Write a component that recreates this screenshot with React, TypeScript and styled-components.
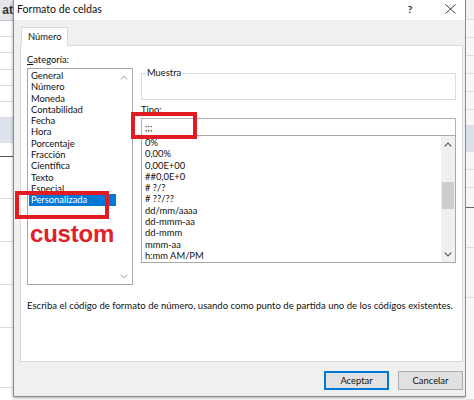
import React from "react";
import styled, { createGlobalStyle } from "styled-components";

const Global = createGlobalStyle`
  html, body { margin: 0; padding: 0; background: #ffffff; }
  body { width: 474px; height: 400px; overflow: hidden; font-family: Lato, "Noto Sans", sans-serif; }
`;

const UI_FONT = "9.4px";

const Page = styled.div`
  position: relative;
  width: 474px;
  height: 400px;
  display: flex;
  overflow: hidden;
  background: #ffffff;
`;

/* ---------- spreadsheet showing behind the dialog ---------- */
const Sheet = styled.div<{ $w: number }>`
  width: ${(p) => p.$w}px;
  flex: none;
  display: flex;
  flex-direction: column;
  background: #ffffff;
  overflow: hidden;
`;

const SheetRow = styled.div<{ $h: number; $bg?: string; $line?: string }>`
  height: ${(p) => p.$h}px;
  flex: none;
  box-sizing: border-box;
  background: ${(p) => p.$bg || "#ffffff"};
  border-bottom: 1px solid ${(p) => p.$line || "#dedede"};
  font-family: "Liberation Sans", Arial, sans-serif;
  font-size: 12px;
  font-weight: bold;
  color: #333;
  line-height: ${(p) => p.$h}px;
  white-space: nowrap;
  direction: rtl;
  overflow: hidden;
`;

/* ---------- dialog ---------- */
const Dialog = styled.div`
  width: 453px;
  height: 397px;
  flex: none;
  box-sizing: border-box;
  border: 1px solid #8a8a8a;
  border-top: none;
  background: #f0f0f0;
  display: flex;
  flex-direction: column;
  box-shadow: 0 1px 3px rgba(0, 0, 0, 0.35);
`;

const TitleBar = styled.div`
  height: 20px;
  flex: none;
  background: #ffffff;
  display: flex;
  align-items: center;
  padding-left: 3px;
`;

const Title = styled.div`
  flex: 1;
  font-size: 10.6px;
  color: #111;
  line-height: 14px;
  margin-top: -3px;
`;

const TitleButton = styled.div<{ $w: number; $ml?: number }>`
  width: ${(p) => p.$w}px;
  margin-left: ${(p) => p.$ml || 0}px;
  height: 20px;
  display: flex;
  align-items: center;
  justify-content: center;
  font-size: 10px;
  font-weight: bold;
  color: #222;
  margin-top: -2px;
`;

const Body = styled.div`
  flex: 1;
  display: flex;
  flex-direction: column;
  padding: 7px 2px 0 6px;
`;

const TabRow = styled.div`
  display: flex;
  height: 18px;
  position: relative;
  z-index: 1;
`;

const Tab = styled.div`
  width: 47px;
  height: 19px;
  box-sizing: border-box;
  background: #ffffff;
  border: 1px solid #d9d9d9;
  border-bottom: none;
  margin-left: 1px;
  padding-left: 6px;
  font-size: ${UI_FONT};
  line-height: 17px;
  color: #111;
`;

const Panel = styled.div`
  height: 317px;
  box-sizing: border-box;
  background: #ffffff;
  border: 1px solid #d9d9d9;
  padding: 8px 5px 0 6px;
  display: flex;
  flex-direction: column;
`;

const Columns = styled.div`
  display: flex;
  gap: 8px;
`;

const LeftCol = styled.div`
  width: 106px;
  display: flex;
  flex-direction: column;
`;

const RightCol = styled.div`
  width: 315px;
  display: flex;
  flex-direction: column;
  padding-top: 19px;
`;

const Label = styled.div`
  font-size: ${UI_FONT};
  line-height: 12px;
  color: #111;
  height: 14px;
`;

const Underline = styled.span`
  text-decoration: underline;
`;

const ListBox = styled.div<{ $h: number }>`
  height: ${(p) => p.$h}px;
  box-sizing: border-box;
  border: 1px solid #a8a8a8;
  display: flex;
  background: #ffffff;
`;

const Items = styled.div`
  flex: 1;
  padding: 1px 0 0 1px;
  overflow: hidden;
`;

const Item = styled.div<{ $sel?: boolean }>`
  height: 11.3px;
  font-size: ${UI_FONT};
  line-height: 11.3px;
  padding-left: 2px;
  white-space: nowrap;
  color: ${(p) => (p.$sel ? "#ffffff" : "#111")};
  background: ${(p) => (p.$sel ? "#0078d7" : "transparent")};
`;

const ScrollBar = styled.div<{ $w: number; $track: string }>`
  width: ${(p) => p.$w}px;
  flex: none;
  background: ${(p) => p.$track};
  display: flex;
  flex-direction: column;
  align-items: stretch;
`;

const ScrollArrow = styled.div`
  height: 16px;
  flex: none;
  display: flex;
  align-items: center;
  justify-content: center;
`;

const ScrollTrack = styled.div`
  flex: 1;
  display: flex;
  flex-direction: column;
`;

const Thumb = styled.div<{ $top: number; $h: number }>`
  margin-top: ${(p) => p.$top}px;
  height: ${(p) => p.$h}px;
  margin-left: 1px;
  margin-right: 1px;
  background: #cdcdcd;
`;

const Group = styled.fieldset`
  margin: 0;
  height: 32px;
  box-sizing: border-box;
  border: 1px solid #dcdcdc;
  padding: 0;
  margin-top: -5px;
`;

const Legend = styled.legend`
  font-size: ${UI_FONT};
  line-height: 10px;
  color: #111;
  padding: 0 1px;
  margin-left: 4px;
`;

const TypeLabel = styled.div`
  font-size: ${UI_FONT};
  line-height: 10px;
  color: #111;
  margin-top: 5px;
  height: 13px;
`;

const TypeInput = styled.div`
  height: 17px;
  box-sizing: border-box;
  border: 1px solid #b4b4b4;
  border-bottom: none;
  font-size: ${UI_FONT};
  line-height: 17px;
  padding-left: 3px;
  color: #111;
`;

const Description = styled.div`
  margin-top: 15px;
  font-size: 9.55px;
  line-height: 12px;
  color: #111;
  white-space: nowrap;
`;

const ButtonRow = styled.div`
  flex: 1;
  display: flex;
  justify-content: flex-end;
  align-items: flex-start;
  gap: 9px;
  padding-top: 9px;
`;

const Button = styled.div<{ $primary?: boolean }>`
  width: 65px;
  height: 19px;
  box-sizing: border-box;
  background: #e1e1e1;
  border: 1px solid ${(p) => (p.$primary ? "#0078d7" : "#adadad")};
  box-shadow: ${(p) => (p.$primary ? "inset 0 0 0 1px #0078d7" : "none")};
  font-size: ${UI_FONT};
  line-height: 17px;
  text-align: center;
  color: #111;
`;

/* ---------- red annotations over the screenshot ---------- */
const RedBox = styled.div<{ $x: number; $y: number; $w: number; $h: number }>`
  position: absolute;
  left: ${(p) => p.$x}px;
  top: ${(p) => p.$y}px;
  width: ${(p) => p.$w}px;
  height: ${(p) => p.$h}px;
  box-sizing: border-box;
  border: 4px solid #e31c23;
  pointer-events: none;
`;

const RedText = styled.div`
  position: absolute;
  left: 30px;
  top: 219px;
  font-family: "Liberation Sans", Arial, sans-serif;
  font-weight: bold;
  font-size: 24px;
  line-height: 30px;
  color: #e2202a;
  letter-spacing: -0.2px;
`;

const Chevron = ({ up, color }: { up?: boolean; color: string }) => (
  <svg width="8" height="5" viewBox="0 0 8 5">
    <path
      d={up ? "M0.7 4.3 L4 1 L7.3 4.3" : "M0.7 0.7 L4 4 L7.3 0.7"}
      fill="none"
      stroke={color}
      strokeWidth="1.1"
    />
  </svg>
);

const CloseIcon = () => (
  <svg width="11" height="10" viewBox="0 0 11 10">
    <path d="M0.5 0.5 L10.5 9.5 M10.5 0.5 L0.5 9.5" stroke="#222" strokeWidth="0.9" fill="none" />
  </svg>
);

const categories = [
  "General",
  "Número",
  "Moneda",
  "Contabilidad",
  "Fecha",
  "Hora",
  "Porcentaje",
  "Fracción",
  "Científica",
  "Texto",
  "Especial",
  "Personalizada",
];

const formats = [
  "0%",
  "0,00%",
  "0,00E+00",
  "##0,0E+0",
  "# ?/?",
  "# ??/??",
  "dd/mm/aaaa",
  "dd-mmm-aa",
  "dd-mmm",
  "mmm-aa",
  "h:mm AM/PM",
];

const leftRows: { h: number; bg?: string; line?: string; text?: string }[] = [
  { h: 21, bg: "#e4e7eb", line: "#c8c8c8", text: "at" },
  { h: 16 },
  { h: 16 },
  { h: 17 },
  { h: 16 },
  { h: 16 },
  { h: 16, bg: "#ffffff" },
  { h: 25, bg: "#dde3ec" },
  { h: 14, line: "#555" },
  { h: 42 },
  { h: 43 },
  { h: 43 },
  { h: 43 },
  { h: 60 },
];

const rightRows: { h: number; bg?: string; line?: string }[] = [
  { h: 20, bg: "#f2f2f2" },
  { h: 18, bg: "#f7f7f7" },
  { h: 18, bg: "#f7f7f7" },
  { h: 18, bg: "#f7f7f7" },
  { h: 18, bg: "#f7f7f7" },
  { h: 18, bg: "#f7f7f7" },
  { h: 16, bg: "#f7f7f7" },
  { h: 26, bg: "#d9e0ea" },
  { h: 18, bg: "#f7f7f7" },
  { h: 18, bg: "#f7f7f7" },
  { h: 20, bg: "#f7f7f7", line: "#666" },
  { h: 40, bg: "#f7f7f7" },
  { h: 50, bg: "#f7f7f7" },
  { h: 102, bg: "#f7f7f7" },
];

export default function App() {
  return (
    <>
      <Global />
      <Page>
        <Sheet $w={13}>
          {leftRows.map((r, i) => (
            <SheetRow key={i} $h={r.h} $bg={r.bg} $line={r.line}>
              {r.text}
            </SheetRow>
          ))}
        </Sheet>
        <Dialog>
          <TitleBar>
            <Title>Formato de celdas</Title>
            <TitleButton $w={16}>?</TitleButton>
            <TitleButton $w={22} $ml={21}>
              <CloseIcon />
            </TitleButton>
            <TitleButton $w={4} />
          </TitleBar>
          <Body>
            <TabRow>
              <Tab>Número</Tab>
            </TabRow>
            <Panel>
              <Columns>
                <LeftCol>
                  <Label>
                    <Underline>C</Underline>ategoría:
                  </Label>
                  <ListBox $h={217}>
                    <Items>
                      {categories.map((c) => (
                        <Item key={c} $sel={c === "Personalizada"}>
                          {c}
                        </Item>
                      ))}
                    </Items>
                    <ScrollBar $w={16} $track="#ffffff">
                      <ScrollArrow>
                        <Chevron up color="#bfbfbf" />
                      </ScrollArrow>
                      <ScrollTrack />
                      <ScrollArrow>
                        <Chevron color="#bfbfbf" />
                      </ScrollArrow>
                    </ScrollBar>
                  </ListBox>
                </LeftCol>
                <RightCol>
                  <Group>
                    <Legend>Muestra</Legend>
                  </Group>
                  <TypeLabel>Tipo:</TypeLabel>
                  <TypeInput>;;;</TypeInput>
                  <ListBox $h={128}>
                    <Items>
                      {formats.map((f) => (
                        <Item key={f}>{f}</Item>
                      ))}
                    </Items>
                    <ScrollBar $w={14} $track="#f0f0f0">
                      <ScrollArrow>
                        <Chevron up color="#555" />
                      </ScrollArrow>
                      <ScrollTrack>
                        <Thumb $top={30} $h={27} />
                      </ScrollTrack>
                      <ScrollArrow>
                        <Chevron color="#555" />
                      </ScrollArrow>
                    </ScrollBar>
                  </ListBox>
                </RightCol>
              </Columns>
              <Description>
                Escriba el código de formato de número, usando como punto de partida uno de los códigos existentes.
              </Description>
            </Panel>
            <ButtonRow>
              <Button $primary>Aceptar</Button>
              <Button>Cancelar</Button>
            </ButtonRow>
          </Body>
        </Dialog>
        <Sheet $w={8}>
          {rightRows.map((r, i) => (
            <SheetRow key={i} $h={r.h} $bg={r.bg} $line={r.line} />
          ))}
        </Sheet>
        <RedBox $x={15} $y={191} $w={94} $h={28} />
        <RedBox $x={131} $y={112} $w={66} $h={27} />
        <RedText>custom</RedText>
      </Page>
    </>
  );
}
